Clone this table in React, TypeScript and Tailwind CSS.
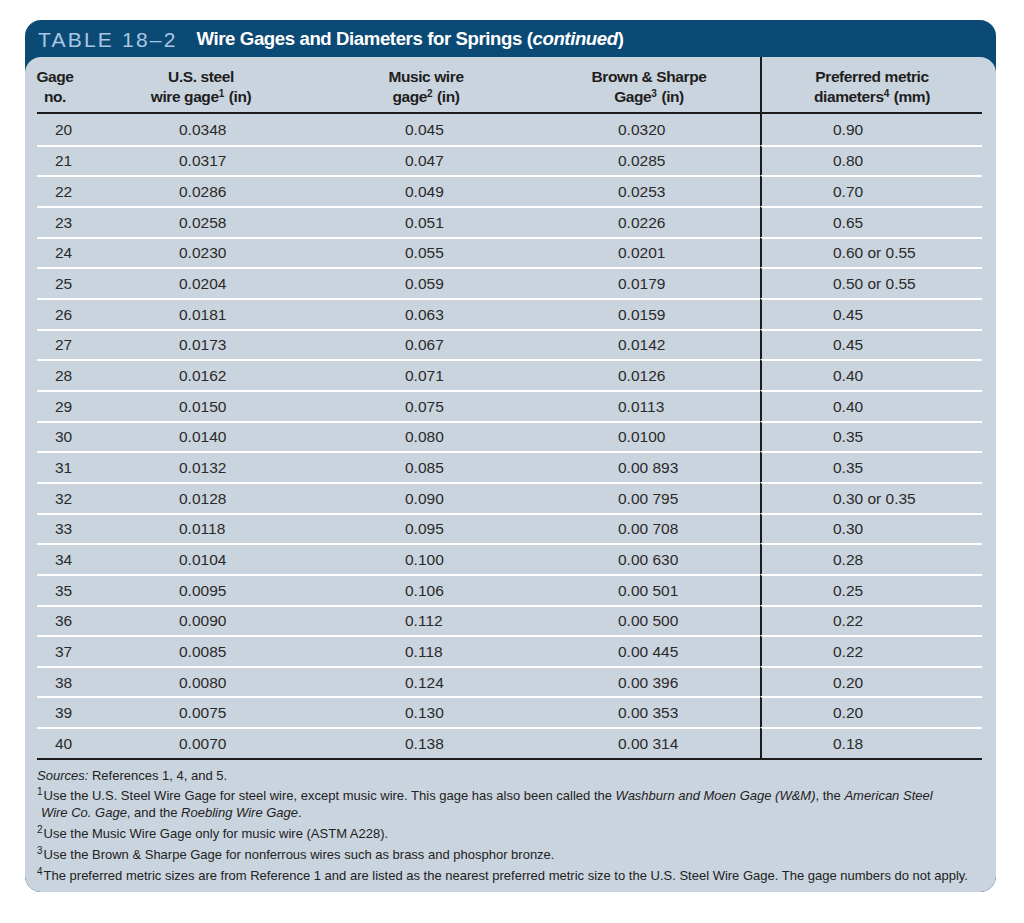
import React from "react";

const rows: string[][] = [
  ["20", "0.0348", "0.045", "0.0320", "0.90"],
  ["21", "0.0317", "0.047", "0.0285", "0.80"],
  ["22", "0.0286", "0.049", "0.0253", "0.70"],
  ["23", "0.0258", "0.051", "0.0226", "0.65"],
  ["24", "0.0230", "0.055", "0.0201", "0.60 or 0.55"],
  ["25", "0.0204", "0.059", "0.0179", "0.50 or 0.55"],
  ["26", "0.0181", "0.063", "0.0159", "0.45"],
  ["27", "0.0173", "0.067", "0.0142", "0.45"],
  ["28", "0.0162", "0.071", "0.0126", "0.40"],
  ["29", "0.0150", "0.075", "0.0113", "0.40"],
  ["30", "0.0140", "0.080", "0.0100", "0.35"],
  ["31", "0.0132", "0.085", "0.00 893", "0.35"],
  ["32", "0.0128", "0.090", "0.00 795", "0.30 or 0.35"],
  ["33", "0.0118", "0.095", "0.00 708", "0.30"],
  ["34", "0.0104", "0.100", "0.00 630", "0.28"],
  ["35", "0.0095", "0.106", "0.00 501", "0.25"],
  ["36", "0.0090", "0.112", "0.00 500", "0.22"],
  ["37", "0.0085", "0.118", "0.00 445", "0.22"],
  ["38", "0.0080", "0.124", "0.00 396", "0.20"],
  ["39", "0.0075", "0.130", "0.00 353", "0.20"],
  ["40", "0.0070", "0.138", "0.00 314", "0.18"],
];

const padClasses = ["pl-[18px]", "pl-[106px]", "pl-[76px]", "pl-[80px]", "pl-[71px]"];

function Sup({ children }: { children: React.ReactNode }) {
  return <sup className="text-[10px] mr-[1px]">{children}</sup>;
}

export default function App() {
  return (
    <div className="min-h-[923px] bg-white pt-[20px] pl-[25px] font-['Liberation_Sans',Arial,sans-serif] text-[#222]">
      <div className="w-[971px] h-[872px] bg-[#0c4a76] rounded-[16px] overflow-hidden flex flex-col">
        {/* Title bar */}
        <div className="h-[37px] flex items-center pl-[13px] pt-[2px] shrink-0 whitespace-nowrap">
          <span className="text-[21px] tracking-[2.2px] text-[#a9c7e2] leading-none">TABLE 18–2</span>
          <span className="ml-[19px] text-[18.6px] font-bold tracking-[-0.4px] text-white leading-none">
            Wire Gages and Diameters for Springs (<i>continued</i>)
          </span>
        </div>
        {/* Body panel */}
        <div className="flex-1 bg-[#cad4de] rounded-[16px] pl-[12px] pr-[14px] flex flex-col">
          {/* Header */}
          <div className="grid grid-cols-[36px_256px_209px_222px_222px] border-b-2 border-[#1c1c1c] text-[15.5px] font-bold tracking-[-0.4px] leading-[20px] text-[#1e1e1e]">
            <div className="h-[55px] flex flex-col items-center justify-end pb-[5px] text-center whitespace-nowrap">
              <span>Gage</span>
              <span>no.</span>
            </div>
            <div className="h-[55px] flex flex-col items-center justify-end pb-[5px] text-center whitespace-nowrap">
              <span>U.S. steel</span>
              <span>
                wire gage<Sup>1</Sup> (in)
              </span>
            </div>
            <div className="h-[55px] flex flex-col items-center justify-end pb-[5px] pr-[15px] text-center whitespace-nowrap">
              <span>Music wire</span>
              <span>
                gage<Sup>2</Sup> (in)
              </span>
            </div>
            <div className="h-[55px] flex flex-col items-center justify-end pb-[5px] text-center whitespace-nowrap">
              <span>Brown &amp; Sharpe</span>
              <span>
                Gage<Sup>3</Sup> (in)
              </span>
            </div>
            <div className="h-[55px] flex flex-col items-center justify-end pb-[5px] text-center whitespace-nowrap border-l-2 border-[#1c1c1c]">
              <span>Preferred metric</span>
              <span>
                diameters<Sup>4</Sup> (mm)
              </span>
            </div>
          </div>
          {/* Rows */}
          <div className="border-b-2 border-[#1c1c1c] grid grid-cols-[36px_256px_209px_222px_222px] text-[15.5px] text-[#2a2a2a]">
            {rows.map((r, i) =>
              r.map((v, j) => (
                <div
                  key={`${i}-${j}`}
                  className={`h-[30.667px] flex items-center whitespace-nowrap ${padClasses[j]} ${
                    i > 0 ? "border-t-2 border-t-white" : ""
                  } ${j === 4 ? "border-l-2 border-l-[#1c1c1c]" : ""}`}
                >
                  {v}
                </div>
              ))
            )}
          </div>
          {/* Footnotes */}
          <div className="pt-[7px] text-[13px] leading-[17px] text-[#222] flex flex-col">
            <p>
              <i>Sources:</i> References 1, 4, and 5.
            </p>
            <p className="mt-[3px] pl-[4px] -indent-[4px] whitespace-nowrap">
              <Sup>1</Sup>Use the U.S. Steel Wire Gage for steel wire, except music wire. This gage has also been called the{" "}
              <i>Washburn and Moen Gage (W&amp;M)</i>, the <i>American Steel</i>
              <br />
              <i>Wire Co. Gage</i>, and the <i>Roebling Wire Gage</i>.
            </p>
            <p className="mt-[4px]">
              <Sup>2</Sup>Use the Music Wire Gage only for music wire (ASTM A228).
            </p>
            <p className="mt-[4px]">
              <Sup>3</Sup>Use the Brown &amp; Sharpe Gage for nonferrous wires such as brass and phosphor bronze.
            </p>
            <p className="mt-[4px] whitespace-nowrap">
              <Sup>4</Sup>The preferred metric sizes are from Reference 1 and are listed as the nearest preferred metric size to the U.S. Steel Wire Gage. The gage numbers do not apply.
            </p>
          </div>
        </div>
      </div>
    </div>
  );
}
